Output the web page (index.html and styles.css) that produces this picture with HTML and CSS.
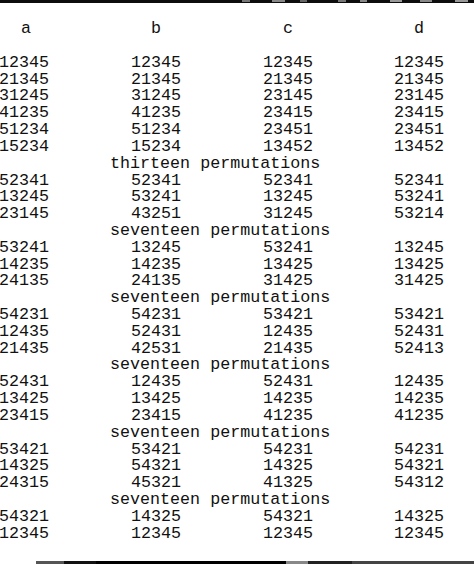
FILE: index.html
```html
<!DOCTYPE html>
<html>
<head>
<meta charset="utf-8">
<link rel="stylesheet" href="styles.css">
</head>
<body>
<div class="rule-top"></div>
<div class="table">
  <div class="row head"><span class="h">a</span><span class="h">b</span><span class="h">c</span><span class="h">d</span></div>
  <div class="body">
    <div class="row"><span>12345</span><span>12345</span><span>12345</span><span>12345</span></div>
    <div class="row"><span>21345</span><span>21345</span><span>21345</span><span>21345</span></div>
    <div class="row"><span>31245</span><span>31245</span><span>23145</span><span>23145</span></div>
    <div class="row"><span>41235</span><span>41235</span><span>23415</span><span>23415</span></div>
    <div class="row"><span>51234</span><span>51234</span><span>23451</span><span>23451</span></div>
    <div class="row"><span>15234</span><span>15234</span><span>13452</span><span>13452</span></div>
    <div class="note">thirteen permutations</div>
    <div class="row"><span>52341</span><span>52341</span><span>52341</span><span>52341</span></div>
    <div class="row"><span>13245</span><span>53241</span><span>13245</span><span>53241</span></div>
    <div class="row"><span>23145</span><span>43251</span><span>31245</span><span>53214</span></div>
    <div class="note">seventeen permutations</div>
    <div class="row"><span>53241</span><span>13245</span><span>53241</span><span>13245</span></div>
    <div class="row"><span>14235</span><span>14235</span><span>13425</span><span>13425</span></div>
    <div class="row"><span>24135</span><span>24135</span><span>31425</span><span>31425</span></div>
    <div class="note">seventeen permutations</div>
    <div class="row"><span>54231</span><span>54231</span><span>53421</span><span>53421</span></div>
    <div class="row"><span>12435</span><span>52431</span><span>12435</span><span>52431</span></div>
    <div class="row"><span>21435</span><span>42531</span><span>21435</span><span>52413</span></div>
    <div class="note">seventeen permutations</div>
    <div class="row"><span>52431</span><span>12435</span><span>52431</span><span>12435</span></div>
    <div class="row"><span>13425</span><span>13425</span><span>14235</span><span>14235</span></div>
    <div class="row"><span>23415</span><span>23415</span><span>41235</span><span>41235</span></div>
    <div class="note">seventeen permutations</div>
    <div class="row"><span>53421</span><span>53421</span><span>54231</span><span>54231</span></div>
    <div class="row"><span>14325</span><span>54321</span><span>14325</span><span>54321</span></div>
    <div class="row"><span>24315</span><span>45321</span><span>41325</span><span>54312</span></div>
    <div class="note">seventeen permutations</div>
    <div class="row"><span>54321</span><span>14325</span><span>54321</span><span>14325</span></div>
    <div class="row"><span>12345</span><span>12345</span><span>12345</span><span>12345</span></div>
  </div>
</div>
<div class="rule-bottom"></div>
</body>
</html>
```

FILE: styles.css
```css
html, body {
  margin: 0;
  padding: 0;
  background: #ffffff;
}
body {
  width: 474px;
  height: 565px;
  overflow: hidden;
  font-family: "Liberation Mono", "DejaVu Sans Mono", monospace;
  font-size: 16.7px;
  line-height: 16.82px;
  color: #111111;
}
.rule-top {
  height: 3px;
  background:
    linear-gradient(90deg,
      transparent 0 242px, #777 242px 250px, transparent 250px 272px,
      #888 272px 285px, transparent 285px 300px, #666 300px 307px,
      transparent 307px 338px, #777 338px 346px, transparent 346px 360px,
      #888 360px 367px, transparent 367px 390px, #999 390px 402px,
      transparent 402px 420px, #888 420px 432px, transparent 432px 455px,
      #999 455px 468px, transparent 468px) top / 100% 2px no-repeat,
    #0d0d0d;
}
.table {
  margin: 18px 0 0 -1px;
}
.row {
  display: grid;
  grid-template-columns: 132px 132px 131px 1fr;
  white-space: pre;
}
.row span {
  width: 5ch;
}
.head .h {
  text-align: center;
}
.head .h:first-child {
  padding-left: 2px;
}
.body {
  margin-top: 17px;
}
.note {
  padding-left: 111px;
  white-space: pre;
}
.rule-bottom {
  margin: 19px 0 0 36px;
  height: 3px;
  background: linear-gradient(90deg,
    #555 0 28px, #111 28px 60px, #000 60px 250px, #888 250px 272px,
    #222 272px 316px, #444 316px 438px);
}
```
